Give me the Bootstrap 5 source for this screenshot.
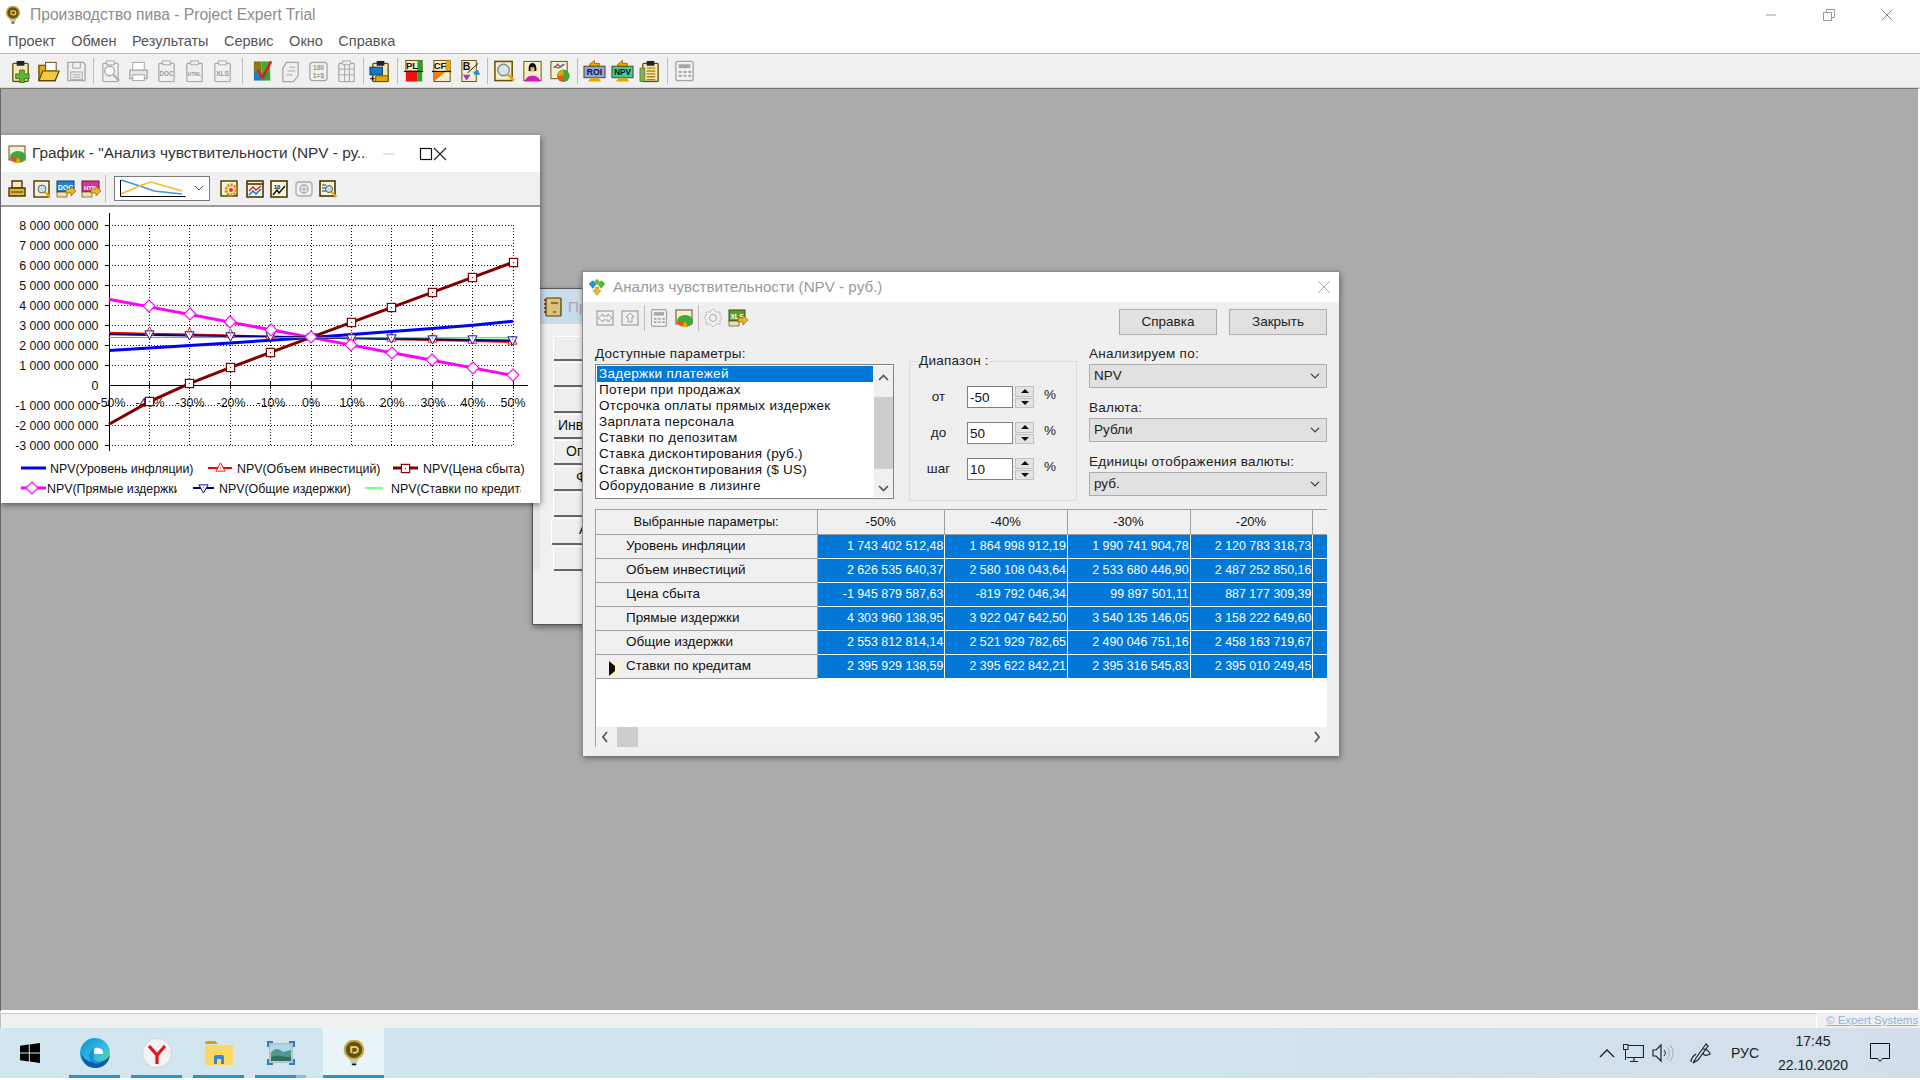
<!DOCTYPE html>
<html lang="ru">
<head>
<meta charset="utf-8">
<title>Производство пива - Project Expert Trial</title>
<link href="https://cdn.jsdelivr.net/npm/bootstrap@5.3.0/dist/css/bootstrap.min.css" rel="stylesheet">
<style>
html,body{margin:0;height:1080px;width:1920px;overflow:hidden;background:#fff}
body{font-family:"Liberation Sans",Arial,sans-serif;font-size:13.5px;color:#222;line-height:1.2}
svg text{font-family:"Liberation Sans",Arial,sans-serif}
.app{height:1080px;width:1920px}
.titlebar{height:30px;background:#fff;padding-left:4px;color:#8d8d8d;font-size:15.6px}
.titlebar .ttl{margin-left:8px}
.winbtn{width:58px;height:30px;display:flex;align-items:center;justify-content:center;color:#999}
.menubar{height:23px;background:#fff;padding-left:8px;gap:15.5px;font-size:14.5px;color:#555;border-bottom:0}
.menubar a{color:#555;text-decoration:none;padding:0}
.mainrule{height:1px;background:#b5b5b5}
.toolbar{height:34px;background:#f0f0f0;padding-left:6px;border-bottom:1px solid #d8d8d8}
.tb{width:28px;height:33px;display:flex;align-items:center;justify-content:center}
.tb svg{width:23px;height:24px}
.sep{width:6px;height:26px;position:relative;flex:none}
.sep:after{content:"";position:absolute;left:50%;top:0;bottom:0;width:1px;background:#bbb}
.sep.w{width:12px}
.mdi{height:924px;background:#ababab;position:relative;border-top:1px solid #777;border-left:1px solid #666;border-right:2px solid #fff;border-bottom:2px solid #fff;overflow:hidden}
.win{position:absolute;box-shadow:1px 2px 6px rgba(0,0,0,.45)}
.gwin{left:-1px;top:46px;width:540px;height:368px;background:#fff}
.gtitle{height:37px;background:#fff;padding-left:7px;font-size:15.4px;color:#333}
.gtitle .t{margin-left:5px;width:335px;white-space:nowrap;overflow:hidden}
.gtool{height:33px;background:#f0f0f0;padding-left:5px;border-bottom:2px solid #9c9c9c;box-sizing:content-box}
.gtool .t2{width:24.5px;display:flex;justify-content:center;align-items:center}
.gtool svg.s{width:20px;height:20px}
.gsep{width:1px;height:27px;background:#bbb;margin:0 8px 0 2px}
.gcombo{width:96px;height:25px;background:#fff;border:1px solid #7a7a7a;margin-right:8px;padding:2px 5px}
.chart{display:block;width:540px;height:296px}
.backwin{left:531px;top:199px;width:70px;height:337px;background:#f0f0f0;border:1px solid #555}
.backhead{height:35px;background:#c9dceb;padding-left:10px;color:#a9a9a9;font-size:15px}
.backhead span{margin-left:5px}
.backbtns{padding:12px 0 0 20px;background:linear-gradient(90deg,#e6e6e6 0 7px,#f0f0f0 7px)}
.backbtn{height:25px;margin-bottom:1px;background:#efefef;border-top:1px solid #fff;border-left:1px solid #fff;border-bottom:2px solid #666;border-radius:2px;font-size:14px;color:#111;padding-top:2px;white-space:nowrap}
.backbtn.a{padding-left:4px}.backbtn.b{padding-left:12px}.backbtn.c{padding-left:22px}.backbtn.d{margin-left:-2px;padding-left:27px;height:27px}
.dlg{left:581px;top:182px;width:757px;height:485px;background:#efefef;border:1px solid #8c8c8c;border-right:0;border-bottom:0}
.dtitle{height:30px;background:#fff;padding-left:4px;color:#9a9a9a;font-size:15.2px}
.dtitle span{margin-left:6px}
.dbody{padding:0 12px 0 12px}
.dtop{height:44px;padding-top:7px}
.dtools{margin-left:-3px;margin-top:-7px}
.dtools .t3{width:25px;height:32px;display:flex;align-items:center;justify-content:center}
.dtools svg{width:20px;height:20px}
.dtools .sep{width:4px}
.dbtn{width:98px;height:26px;border:1px solid #adadad;background:#e1e1e1;border-radius:0;padding:0;font-size:13.5px;color:#222;line-height:24px}
.dbtn:hover{background:#e1e1e1;border-color:#adadad;color:#222}
.dcols{height:163px}
.c1{width:299px}.c2{width:168px;margin-left:15px}.c3{width:238px;margin-left:12px}
.lbl{height:18px;line-height:15px;letter-spacing:.25px;white-space:nowrap}
.lst{height:135px;width:299px;background:#fff;border:1px solid #828282;padding:1px 1px 1px 1px;display:flex}
.lst .list-group{width:276px;border-radius:0;--bs-list-group-border-width:0;flex:none}
.lst .list-group-item{padding:0 0 0 2px;height:16px;line-height:16px;font-size:13.5px;letter-spacing:.3px;border-radius:0;background:#fff;color:#111;white-space:nowrap}
.lst .list-group-item.active{background:#0078d7;color:#fff;z-index:0}
.vs{width:19px;margin-left:1px;background:#f0f0f0;display:flex;flex-direction:column;align-items:center;justify-content:space-between;padding:8px 0 5px}
.vs .th{width:19px;height:72px;background:#cdcdcd}
.fs{margin:7px 0 0;border:1px solid #dcdcdc;height:148px;padding:0 0 0 0;min-width:0}
.fs legend{float:none;width:auto;margin:-9px 0 0 8px;padding:0 1px;font-size:13.5px;line-height:16px;background:#efefef;letter-spacing:.25px}
.fr{height:36px;padding-left:0}
.fwrap{padding-top:10px}
.fr .n{width:57px;text-align:center;padding-right:0}
.fr .form-control{width:46px;height:22px;padding:0 0 0 2px;border:1px solid #7f7f7f;border-radius:0;font-size:13.5px;font-family:inherit;color:#111;line-height:20px;box-shadow:none}
.spin{width:19px;height:22px;margin-left:2px;display:flex;flex-direction:column;gap:1px}
.spin i{flex:1;background:#e3e3e3;border:1px solid #c0c0c0;display:flex;align-items:center;justify-content:center}
.up{width:0;height:0;border:4px solid transparent;border-top:0;border-bottom:4px solid #111}
.dn{width:0;height:0;border:4px solid transparent;border-bottom:0;border-top:4px solid #111}
.fr .pct{margin-left:10px;font-size:13.5px;margin-top:-4px}
.form-select.sel{height:24px;border-radius:0;border:1px solid #adadad;background-color:#e1e1e1;font-size:13.5px;padding:0 24px 0 4px;color:#222;line-height:22px;box-shadow:none;font-family:inherit;background-position:right 5px center;background-size:12px 10px}
.c3 .lbl+.sel{margin-bottom:12px}
.gridf{width:732px;height:238px;background:#fff;border-left:1px solid #a0a0a0;border-top:1px solid #a0a0a0;display:flex;flex-direction:column;margin-bottom:0}
.gridc{height:217px;overflow:hidden}
.tbl{table-layout:fixed;width:840px;margin:0;border-collapse:collapse;--bs-table-bg:transparent;font-size:12.4px}
.tbl td,.tbl th{height:24px;padding:0 1px 0 0;font-weight:400;white-space:nowrap;overflow:hidden;vertical-align:middle;border:1px solid #fff;border-width:0 1px 1px 0;box-shadow:none;line-height:22px}
.tbl th{background:#f0f0f0;color:#111;border-color:#a0a0a0;border-width:0 1px 1px 0;text-align:center;font-size:13px}
.tbl th.h0{padding-left:0}
.tbl tbody th{text-align:left;padding-left:30px;position:relative;font-size:13.5px}
.tbl td{background:#0078d7;color:#fff;text-align:right}
.tbl .lastc{border-bottom:1px solid #a0a0a0}
.tbl .mark{position:absolute;left:13px;top:6px;width:0;height:0;border:5px solid transparent;border-left:6px solid #111;border-right:0}
.hs{height:20px;background:#f0f0f0;display:flex;align-items:center;justify-content:space-between;padding-right:6px;padding-left:5px;position:relative}
.hs .th{position:absolute;left:21px;top:0;width:21px;height:20px;background:#cdcdcd}
.status{height:16px;background:#f0f0f0;border-top:1px solid #fff;padding:0}
.status .cell1{width:1817px;border:1px solid #fff;border-left:1px solid #bbb;border-top:1px solid #c8c8c8;height:16px}
.status a{margin-left:9px;color:#8fb3d9;font-size:11.5px;line-height:14px;text-decoration:underline;white-space:nowrap}
.taskbar{height:50px;background:linear-gradient(90deg,#d1e6ee 0,#d1e5ee 50%,#d3deea 100%);position:relative}
.tapp{width:51px;height:50px;margin-right:11px;display:flex;align-items:center;justify-content:center;border-bottom:3px solid #2b93c9;padding-top:3px}
.tapp.act{width:61px;margin:0 0 0 6px;background:#e9f4f9}
.tapp.pic{border-image:linear-gradient(90deg,#2b93c9 0 80%,#89bfdd 80%) 1}
.tstart{width:60px;height:50px;margin-right:9px;display:flex;align-items:center;justify-content:center}
.tray{color:#222;font-size:14px}
.tray .lang{width:30px;margin-left:19px;font-size:14px;text-align:center}
.clock{width:72px;margin-left:17px;text-align:center;font-size:14px;line-height:24px;white-space:nowrap}
.ntf{margin-left:21px;margin-right:30px}
</style>
</head>
<body>
<svg width="0" height="0" class="position-absolute">
<defs>
<symbol id="clipb" viewBox="0 0 24 24"><rect x="4" y="4" width="16" height="19" rx="1" fill="#f3e7bd" stroke="#6b4f00" stroke-width="1.4"/><rect x="8" y="1.5" width="8" height="5" fill="#222"/></symbol>
<symbol id="clipg" viewBox="0 0 24 24"><rect x="4" y="4" width="16" height="19" rx="1" fill="#f0f0f0" stroke="#a9a9a9" stroke-width="1.3"/><rect x="8" y="1.5" width="8" height="4" fill="#f0f0f0" stroke="#a9a9a9"/></symbol>
<symbol id="i-new" viewBox="0 0 24 24"><use href="#clipb"/><path d="M11 11h5v4h5v5h-5v4h-5v-4H7v-5h4z" fill="#63b32e" stroke="#2d6a10" stroke-width=".8"/></symbol>
<symbol id="i-open" viewBox="0 0 24 24"><path d="M2 6h7l2 2h8v14H2z" fill="#e8a800" stroke="#5f4500" stroke-width="1.3"/><rect x="9" y="3" width="11" height="9" fill="#fff" stroke="#5f4500"/><path d="M6 12h17l-4 10H2z" fill="#f6c93d" stroke="#5f4500" stroke-width="1.3"/></symbol>
<symbol id="i-save" viewBox="0 0 24 24"><path d="M3 3h16l2 2v17H3z" fill="#f0f0f0" stroke="#a5a5a5" stroke-width="1.4"/><rect x="8" y="3" width="8" height="6" fill="none" stroke="#a5a5a5"/><rect x="6" y="13" width="12" height="8" fill="none" stroke="#a5a5a5"/><path d="M8 16h8M8 18.500h8" stroke="#a5a5a5"/></symbol>
<symbol id="i-prev" viewBox="0 0 24 24"><use href="#clipg"/><circle cx="11" cy="12" r="5" fill="#fff" stroke="#a5a5a5" stroke-width="1.4"/><path d="M15 16l6 6" stroke="#a5a5a5" stroke-width="2"/></symbol>
<symbol id="i-print" viewBox="0 0 24 24"><rect x="6" y="3" width="12" height="9" fill="#fff" stroke="#a5a5a5"/><path d="M3 11h18v9H3z" fill="#e6e6e6" stroke="#a5a5a5" stroke-width="1.3"/><rect x="6" y="16" width="12" height="6" fill="#fff" stroke="#a5a5a5"/></symbol>
<symbol id="i-doc" viewBox="0 0 24 24"><use href="#clipg"/><text x="12" y="17" font-size="6.6" text-anchor="middle" fill="#999" font-weight="700">DOC</text></symbol>
<symbol id="i-html" viewBox="0 0 24 24"><use href="#clipg"/><text x="12" y="17" font-size="5.2" text-anchor="middle" fill="#999" font-weight="700">HTML</text></symbol>
<symbol id="i-xls" viewBox="0 0 24 24"><use href="#clipg"/><text x="12" y="17" font-size="7" text-anchor="middle" fill="#999" font-weight="700">XLS</text></symbol>
<symbol id="i-chk" viewBox="0 0 24 24"><rect x="3" y="2" width="8" height="11" fill="#8a7a10"/><rect x="11" y="2" width="9" height="11" fill="#46a82f"/><rect x="3" y="13" width="8" height="9" fill="#1780b8"/><rect x="11" y="13" width="9" height="9" fill="#2da43e"/><path d="M7 11l5 8 9-17" fill="none" stroke="#e21b1b" stroke-width="2.6"/></symbol>
<symbol id="i-list" viewBox="0 0 24 24"><path d="M8 3h12v14l-5 6H4V9z" fill="#f0f0f0" stroke="#a5a5a5" stroke-width="1.3"/><path d="M11 8h6M9 12h8M8 16h6" stroke="#a5a5a5"/></symbol>
<symbol id="i-num" viewBox="0 0 24 24"><rect x="3" y="3" width="18" height="19" rx="3" fill="#f0f0f0" stroke="#a5a5a5" stroke-width="1.3"/><text x="12" y="11" font-size="7" text-anchor="middle" fill="#999" font-weight="700">180</text><text x="12" y="19.500" font-size="7" text-anchor="middle" fill="#999" font-weight="700">1=$</text></symbol>
<symbol id="i-grid" viewBox="0 0 24 24"><use href="#clipg"/><path d="M4 10h16M4 16h16M10 5v18M15 5v18" stroke="#a5a5a5"/></symbol>
<symbol id="i-flow" viewBox="0 0 24 24"><use href="#clipb"/><rect x="1" y="8" width="13" height="8" fill="#1a76c4" stroke="#0a3c6b"/><path d="M7 17h13v6H7z" fill="#e8a800" stroke="#6b4f00"/><path d="M1 20h5M3.500 18v4" stroke="#111"/></symbol>
<symbol id="i-pl" viewBox="0 0 24 24"><rect x="3" y="1" width="17" height="11" fill="#f5eecd" stroke="#6b4f00"/><rect x="15" y="1" width="5" height="22" fill="#26a326"/><text x="9.500" y="10" font-size="10" text-anchor="middle" font-weight="700" fill="#111">PL</text><path d="M1 12.500h20" stroke="#111" stroke-width="1.3"/><rect x="3" y="13" width="12" height="10" fill="#ec0f0f"/></symbol>
<symbol id="i-cf" viewBox="0 0 24 24"><rect x="3" y="1" width="17" height="22" fill="#f5eecd" stroke="#6b4f00"/><path d="M15 1h5v12h-5z" fill="#e8a800"/><text x="9.500" y="10" font-size="10" text-anchor="middle" font-weight="700" fill="#111">CF</text><path d="M1 12.500h20" stroke="#111" stroke-width="1.3"/><path d="M3 23V13h12z" fill="#f07b10"/></symbol>
<symbol id="i-b" viewBox="0 0 24 24"><rect x="3" y="1" width="15" height="22" fill="#f5eecd" stroke="#6b4f00"/><text x="8" y="11" font-size="11" text-anchor="middle" font-weight="700" fill="#111">B</text><path d="M4 16l4 6 4-6z" fill="#b52bc4"/><path d="M15 13l5-2 2 5h-6z" fill="#1f8fc4"/><path d="M9 14l11-10" stroke="#111"/></symbol>
<symbol id="i-mag" viewBox="0 0 24 24"><rect x="2" y="2" width="18" height="20" fill="#f5eecd" stroke="#6b4f00" stroke-width="1.6"/><circle cx="11" cy="11" r="6" fill="#cfe6ef" stroke="#888" stroke-width="1.4"/><path d="M15 15l7 7" stroke="#e1ac1c" stroke-width="3"/></symbol>
<symbol id="i-per" viewBox="0 0 24 24"><rect x="3" y="2" width="18" height="20" fill="#f5eecd" stroke="#6b4f00"/><circle cx="12" cy="9" r="4" fill="#e9b98b"/><path d="M8 9c0-7 8-7 8 0v3h-2V8h-4v4H8z" fill="#111"/><path d="M4 23c1-8 15-8 16 0z" fill="#d917c2"/></symbol>
<symbol id="i-pie" viewBox="0 0 24 24"><rect x="2" y="2" width="17" height="18" fill="#f5eecd" stroke="#6b4f00"/><path d="M5 9l4-4 3 3 4-3" fill="none" stroke="#e44" stroke-width="1.4"/><path d="M5 7l5 2 5-4" fill="none" stroke="#27c" stroke-width="1.2"/><circle cx="15" cy="17" r="6.500" fill="#3fa83a"/><path d="M15 17V11a6 6 0 0 0-6 6z" fill="#e8a800"/><path d="M15 17H9a6 6 0 0 0 7 6z" fill="#e5541c"/></symbol>
<symbol id="i-roi" viewBox="0 0 24 24"><path d="M7 5l5-4v3h5v4H7z" fill="#e8a800" stroke="#6b4f00" stroke-width=".7"/><rect x="1" y="7" width="22" height="12" fill="#8fa4e8" stroke="#5c4300"/><text x="12" y="16.500" font-size="9" text-anchor="middle" font-weight="700" fill="#111">ROI</text><path d="M8 19h8l3 4H5z" fill="#e8a800"/></symbol>
<symbol id="i-npv" viewBox="0 0 24 24"><path d="M7 5l5-4v3h5v4H7z" fill="#e8a800" stroke="#6b4f00" stroke-width=".7"/><rect x="1" y="7" width="22" height="12" fill="#3fc9a0" stroke="#5c4300"/><text x="12" y="16.500" font-size="8.500" text-anchor="middle" font-weight="700" fill="#111">NPV</text><path d="M8 19h8l3 4H5z" fill="#e8a800"/></symbol>
<symbol id="i-cl" viewBox="0 0 24 24"><use href="#clipb"/><path d="M1 9h5v14H1z" fill="#7cba3e" stroke="#555" stroke-width=".7"/><path d="M8 9h9M8 12h9M8 15h9M8 18h9M8 21h9" stroke="#b88400" stroke-width="1.5"/></symbol>
<symbol id="i-calc" viewBox="0 0 24 24"><rect x="3" y="2" width="18" height="20" rx="2" fill="#f0f0f0" stroke="#a5a5a5" stroke-width="1.4"/><rect x="6" y="5" width="12" height="4" fill="#a5a5a5"/><path d="M6 12h3v2H6zm5 0h3v2h-3zm5 0h3v2h-3zM6 16h3v2H6zm5 0h3v2h-3zm5 0h3v2h-3z" fill="#a5a5a5"/></symbol>
<symbol id="s-print" viewBox="0 0 20 20"><path d="M5 2h10v7H5z" fill="#f4e9c0" stroke="#4a3800" stroke-width="1.4"/><path d="M2 9h16v8H2z" fill="#e0b53b" stroke="#4a3800" stroke-width="1.4"/><path d="M4 13h12" stroke="#4a3800"/></symbol>
<symbol id="s-mag" viewBox="0 0 20 20"><rect x="2" y="2" width="15" height="16" fill="#f6f1db" stroke="#4a3800" stroke-width="1.4"/><circle cx="10" cy="10" r="4" fill="#bfe0f2" stroke="#666"/><path d="M13 13l5 5" stroke="#e1ac1c" stroke-width="2.4"/></symbol>
<symbol id="s-doc" viewBox="0 0 20 20"><rect x="1" y="2" width="17" height="11" fill="#1f87c9" stroke="#0e3b63"/><text x="9.500" y="10.500" font-size="7" text-anchor="middle" font-weight="700" fill="#fff">DOC</text><path d="M1 13v5h10v-5z" fill="#e9dfb8" stroke="#6b4f00" stroke-width=".7"/><path d="M10 10h5V7l5 5-5 5v-3h-5z" fill="#f2b322" stroke="#7a5a00" stroke-width=".6"/></symbol>
<symbol id="s-html" viewBox="0 0 20 20"><rect x="1" y="2" width="17" height="11" fill="#d7358f" stroke="#6b1048"/><text x="9.500" y="10.500" font-size="6" text-anchor="middle" font-weight="700" fill="#fff">HTM</text><path d="M1 13v5h10v-5z" fill="#e9dfb8" stroke="#6b4f00" stroke-width=".7"/><path d="M10 10h5V7l5 5-5 5v-3h-5z" fill="#f2b322" stroke="#7a5a00" stroke-width=".6"/></symbol>
<symbol id="s-gear" viewBox="0 0 20 20"><rect x="1" y="2" width="16" height="15" fill="#f6f1db" stroke="#4a3800" stroke-width="1.4"/><circle cx="11" cy="11" r="5" fill="none" stroke="#e39200" stroke-width="3" stroke-dasharray="2.200 1"/><circle cx="11" cy="11" r="2" fill="#e3322c"/></symbol>
<symbol id="s-cha" viewBox="0 0 20 20"><rect x="2" y="2" width="16" height="16" fill="#f9f5e2" stroke="#4a3800" stroke-width="1.6"/><path d="M2 5h16" stroke="#4a3800" stroke-width="1.6"/><path d="M4 12l4-4 3 3 5-4" fill="none" stroke="#d22" stroke-width="1.5"/><path d="M4 16l4-4 3 3 5-5" fill="none" stroke="#17c" stroke-width="1.5"/></symbol>
<symbol id="s-chb" viewBox="0 0 20 20"><rect x="2" y="2" width="16" height="16" fill="#f9f5e2" stroke="#4a3800" stroke-width="1.6"/><text x="8" y="9.500" font-size="6" font-weight="700" text-anchor="middle" fill="#111">10</text><path d="M4 16l4-5 2 3 6-7" fill="none" stroke="#111" stroke-width="1.4"/></symbol>
<symbol id="s-gg" viewBox="0 0 20 20"><rect x="2" y="3" width="16" height="14" rx="3" fill="#f0f0f0" stroke="#aaa" stroke-width="1.3"/><circle cx="10" cy="10" r="4" fill="none" stroke="#aaa" stroke-width="1.3"/><path d="M6 10h8M10 6v8" stroke="#aaa"/></symbol>
<symbol id="s-tbm" viewBox="0 0 20 20"><rect x="2" y="2" width="15" height="15" fill="#f6f1db" stroke="#4a3800" stroke-width="1.6"/><path d="M4 6h4M4 9h4M4 12h4" stroke="#333"/><circle cx="11" cy="10" r="3.500" fill="#bfe0f2" stroke="#555"/><path d="M13.500 13l5 5" stroke="#e1ac1c" stroke-width="2.2"/></symbol>
<symbol id="s-in" viewBox="0 0 20 20"><rect x="2" y="3" width="16" height="14" fill="#f0f0f0" stroke="#a5a5a5" stroke-width="1.3"/><path d="M3 10l5-4v2h5V6l4 4-4 4v-2H8v2z" fill="none" stroke="#a5a5a5"/></symbol>
<symbol id="s-up" viewBox="0 0 20 20"><rect x="2" y="3" width="16" height="14" fill="#f0f0f0" stroke="#a5a5a5" stroke-width="1.3"/><path d="M10 5l4 4h-2v5H8V9H6z" fill="none" stroke="#a5a5a5"/></symbol>
<symbol id="s-pie" viewBox="0 0 20 20"><rect x="2" y="2" width="16" height="14" fill="#f4efdc" stroke="#6b4f00"/><ellipse cx="11" cy="13" rx="8" ry="6" fill="#3fa83a"/><path d="M11 13H3a8 6 0 0 0 5 5.500z" fill="#e5541c"/><path d="M11 13l-3 5.500a8 6 0 0 0 6 0z" fill="#e8a800"/></symbol>
<symbol id="s-ggr" viewBox="0 0 20 20"><path d="M10 1l3 3 4 0v4l2 2-2 2v4h-4l-3 3-3-3H3v-4l-2-2 2-2V4h4z" fill="#f0f0f0" stroke="#aaa" stroke-dasharray="2 1"/><circle cx="10" cy="10" r="3.500" fill="none" stroke="#aaa"/></symbol>
<symbol id="s-xls" viewBox="0 0 20 20"><rect x="1" y="2" width="16" height="11" fill="#5b9c2c" stroke="#3a4d10"/><text x="9" y="10.500" font-size="7" text-anchor="middle" font-weight="700" fill="#fff">XLS</text><path d="M1 13v5h10v-5z" fill="#e9dfb8" stroke="#6b4f00" stroke-width=".7"/><path d="M10 10h5V7l5 5-5 5v-3h-5z" fill="#f2b322" stroke="#7a5a00" stroke-width=".6"/></symbol>
<symbol id="s-cube" viewBox="0 0 24 24"><path d="M12 2l4 4-4 4-4-4z" fill="#6ebc2e"/><path d="M2 8l5-4 4 5-4 5z" fill="#1e90d8"/><path d="M22 8l-5-4-4 5 4 5z" fill="#57b73c"/><path d="M12 22l5-6h-3v-4h-4v4H7z" fill="#f0b62d" stroke="#a87a00" stroke-width=".6"/></symbol>
<symbol id="s-book" viewBox="0 0 20 20"><rect x="3" y="1" width="15" height="18" rx="1" fill="#dcc27a" stroke="#4d3a00" stroke-width="1.2"/><path d="M3 3h-2M3 7H1m2 4H1m2 4H1" stroke="#4d3a00" stroke-width="1.4"/><path d="M8 6h7M10 15h3" stroke="#222" stroke-width="1.2"/></symbol>
<symbol id="bulb" viewBox="0 0 24 24"><circle cx="12" cy="9" r="8.500" fill="#5d5024" stroke="#c9aa3d" stroke-width="2"/><path d="M9.500 12V6.500h3.500a2.500 2.500 0 0 1 0 5.200h-2" fill="none" stroke="#f3cf45" stroke-width="1.8"/><path d="M8 18.500h8M9 20.500h6" stroke="#b7b7a2" stroke-width="1.4"/><path d="M10 22.500h4" stroke="#111" stroke-width="1.6"/></symbol>
<symbol id="m-tri" viewBox="0 0 12 12" overflow="visible"><path d="M6 1L11 10H1z" fill="#fff" stroke="#ff0000" stroke-width="1"/><rect x="5.500" y="6" width="1" height="1" fill="#ff0000"/></symbol>
<symbol id="m-sq" viewBox="0 0 12 12"><rect x="1.500" y="1.500" width="9" height="9" fill="#fff" stroke="#800000" stroke-width="1.300"/><rect x="5.500" y="5.500" width="1.200" height="1.200" fill="#800000"/></symbol>
<symbol id="m-dia" viewBox="0 0 14 14"><path d="M7 1l6 6-6 6-6-6z" fill="#fff" stroke="#ff00ff" stroke-width="1.100"/></symbol>
<symbol id="m-tv" viewBox="0 0 12 12"><path d="M1 2h10L6 11z" fill="#fff" stroke="#000080" stroke-width="1"/><rect x="5.500" y="4" width="1" height="1" fill="#000080"/></symbol>
</defs>
</svg>

<div class="app d-flex flex-column">
  <div class="titlebar d-flex align-items-center">
    <svg width="18" height="22" viewBox="0 0 24 24"><use href="#bulb"/></svg>
    <span class="ttl flex-grow-1">Производство пива - Project Expert Trial</span>
    <div class="winbtn"><svg width="12" height="12"><path d="M1 6h10" stroke="#999"/></svg></div>
    <div class="winbtn"><svg width="12" height="12"><path d="M.5 3.500h8v8h-8zM3.500 3V.5h8v8H9" fill="none" stroke="#999"/></svg></div>
    <div class="winbtn"><svg width="12" height="12"><path d="M.5.5l11 11M11.500.5l-11 11" stroke="#888"/></svg></div>
    <div style="width:4px"></div>
  </div>
  <nav class="menubar nav align-items-center">
    <a class="nav-link" href="#">Проект</a><a class="nav-link" href="#">Обмен</a><a class="nav-link" href="#">Результаты</a><a class="nav-link" href="#">Сервис</a><a class="nav-link" href="#">Окно</a><a class="nav-link" href="#">Справка</a>
  </nav>
  <div class="mainrule"></div>
  <div class="toolbar d-flex align-items-center">
    <span class="tb"><svg><use href="#i-new"/></svg></span><span class="tb"><svg><use href="#i-open"/></svg></span><span class="tb"><svg><use href="#i-save"/></svg></span>
    <span class="sep"></span>
    <span class="tb"><svg><use href="#i-prev"/></svg></span><span class="tb"><svg><use href="#i-print"/></svg></span><span class="tb"><svg><use href="#i-doc"/></svg></span><span class="tb"><svg><use href="#i-html"/></svg></span><span class="tb"><svg><use href="#i-xls"/></svg></span>
    <span class="sep w"></span>
    <span class="tb"><svg><use href="#i-chk"/></svg></span><span class="tb"><svg><use href="#i-list"/></svg></span><span class="tb"><svg><use href="#i-num"/></svg></span><span class="tb"><svg><use href="#i-grid"/></svg></span>
    <span class="sep"></span>
    <span class="tb"><svg><use href="#i-flow"/></svg></span>
    <span class="sep"></span>
    <span class="tb"><svg><use href="#i-pl"/></svg></span><span class="tb"><svg><use href="#i-cf"/></svg></span><span class="tb"><svg><use href="#i-b"/></svg></span>
    <span class="sep"></span>
    <span class="tb"><svg><use href="#i-mag"/></svg></span><span class="tb"><svg><use href="#i-per"/></svg></span><span class="tb"><svg><use href="#i-pie"/></svg></span>
    <span class="sep"></span>
    <span class="tb"><svg><use href="#i-roi"/></svg></span><span class="tb"><svg><use href="#i-npv"/></svg></span><span class="tb"><svg><use href="#i-cl"/></svg></span>
    <span class="sep"></span>
    <span class="tb"><svg><use href="#i-calc"/></svg></span>
  </div>

  <main class="mdi">
    <div class="win backwin">
      <div class="backhead d-flex align-items-center"><svg width="20" height="20"><use href="#s-book"/></svg><span>Пр</span></div>
      <div class="backbtns">
        <div class="backbtn"></div><div class="backbtn"></div><div class="backbtn"></div>
        <div class="backbtn a">Инв</div><div class="backbtn b">Оп</div><div class="backbtn c">Ф</div><div class="backbtn"></div><div class="backbtn d">А</div><div class="backbtn"></div>
      </div>
    </div>

    <section class="win gwin">
      <div class="gtitle d-flex align-items-center">
        <svg width="20" height="20"><use href="#s-pie"/></svg>
        <div class="t">График - "Анализ чувствительности (NPV - ру...</div>
        <svg width="12" height="12" class="ms-3"><path d="M0 6h12" stroke="#ccc"/></svg>
        <svg width="14" height="14" class="ms-4 ps-0"><rect x="1.500" y="1.500" width="11" height="11" fill="none" stroke="#111" stroke-width="1.2"/></svg>
        <svg width="14" height="14" class="close-x"><path d="M1 1l12 12M13 1L1 13" stroke="#222" stroke-width="1.1"/></svg>
      </div>
      <div class="gtool d-flex align-items-center">
        <span class="t2"><svg class="s"><use href="#s-print"/></svg></span><span class="t2"><svg class="s"><use href="#s-mag"/></svg></span><span class="t2"><svg class="s"><use href="#s-doc"/></svg></span><span class="t2"><svg class="s"><use href="#s-html"/></svg></span>
        <span class="gsep"></span>
        <div class="gcombo d-flex align-items-center justify-content-between">
          <svg width="66" height="19" viewBox="0 0 66 19"><path d="M1 1l22 7 11 4 28 3" transform="translate(0,0)" fill="none" stroke="#3f97d6" stroke-width="1.5"/><path d="M1 15l21-9 9-3 31 9" fill="none" stroke="#f2bd26" stroke-width="1.500"/><path d="M.5 1v16.500h65" fill="none" stroke="#000"/></svg>
          <svg width="10" height="7"><path d="M1 1l4 4 4-4" fill="none" stroke="#555"/></svg>
        </div>
        <span class="t2"><svg class="s"><use href="#s-gear"/></svg></span><span class="t2"><svg class="s"><use href="#s-cha"/></svg></span><span class="t2"><svg class="s"><use href="#s-chb"/></svg></span><span class="t2"><svg class="s"><use href="#s-gg"/></svg></span><span class="t2"><svg class="s"><use href="#s-tbm"/></svg></span>
      </div>
      <svg class="chart" viewBox="0 207 540 296" font-size="12.4" fill="#111">
        <g stroke="#111" stroke-width="1" stroke-dasharray="1 2">
          <path d="M109 225.500H513M109 245.500H513M109 265.500H513M109 285.500H513M109 305.500H513M109 325.500H513M109 345.500H513M109 365.500H513M109 405.500H513M109 425.500H513M109 445.500H513"/>
          <path d="M149.500 225V445M189.500 225V445M230.500 225V445M270.500 225V445M311.500 225V445M351.500 225V445M391.500 225V445M432.500 225V445M472.500 225V445M513.500 225V445"/>
        </g>
        <g stroke="#000"><path d="M109.500 213V451M109 385.500H528"/><path d="M105 225.500h4M105 245.500h4M105 265.500h4M105 285.500h4M105 305.500h4M105 325.500h4M105 345.500h4M105 365.500h4M105 405.500h4M105 425.500h4M105 445.500h4" /><path d="M149.500 381v8M189.500 381v8M230.500 381v8M270.500 381v8M311.500 381v8M351.500 381v8M391.500 381v8M432.500 381v8M472.500 381v8M513.500 381v8"/></g>
        <g text-anchor="end">
          <text x="98.500" y="230">8 000 000 000</text><text x="98.500" y="250">7 000 000 000</text><text x="98.500" y="270">6 000 000 000</text><text x="98.500" y="290">5 000 000 000</text><text x="98.500" y="310">4 000 000 000</text><text x="98.500" y="330">3 000 000 000</text><text x="98.500" y="350">2 000 000 000</text><text x="98.500" y="370">1 000 000 000</text><text x="98.500" y="390">0</text><text x="98.500" y="410">-1 000 000 000</text><text x="98.500" y="430">-2 000 000 000</text><text x="98.500" y="450">-3 000 000 000</text>
        </g>
        <g text-anchor="middle">
          <text x="111" y="407">-50%</text><text x="150" y="407">-40%</text><text x="190" y="407">-30%</text><text x="231" y="407">-20%</text><text x="271" y="407">-10%</text><text x="311" y="407">0%</text><text x="352" y="407">10%</text><text x="392" y="407">20%</text><text x="433" y="407">30%</text><text x="473" y="407">40%</text><text x="513" y="407">50%</text>
        </g>
        <polyline fill="none" stroke="#0000ff" stroke-width="3" points="109,350.400 149.400,348 189.800,345.500 230.200,342.900 270.600,340.200 311,337.400 351.400,334.500 391.800,331.500 432.200,328.500 472.600,325.300 513,321.300"/>
        <polyline fill="none" stroke="#ff0000" stroke-width="2" points="109,332.800 149.400,333.700 189.800,334.600 230.200,335.600 270.600,336.500 311,337.400 351.400,338.300 391.800,339.300 432.200,340.100 472.600,341.100 513,342"/>
        <polyline fill="none" stroke="#ff00ff" stroke-width="3" points="109,299.200 149.400,306.900 189.800,314.500 230.200,322.100 270.600,329.800 311,337.400 351.400,345.100 391.800,352.700 432.200,360.300 472.600,367.900 513,375.500"/>
        <polyline fill="none" stroke="#800000" stroke-width="3" points="109,424.200 149.400,401.700 189.800,383.300 230.200,367.600 270.600,352.400 311,337.400 351.400,322.300 391.800,307.300 432.200,292.300 472.600,277.300 513,262.300"/>
        <polyline fill="none" stroke="#000080" stroke-width="2" points="109,334.200 149.400,334.900 189.800,335.500 230.200,336.100 270.600,336.800 311,337.400 351.400,338.100 391.800,338.700 432.200,339.300 472.600,339.900 513,340.600"/>
        <polyline fill="none" stroke="#00ff00" stroke-width="1" points="109,337.500 513,337.800"/>
        <g>
          <use href="#m-tri" x="144" y="326" width="11" height="11"/><use href="#m-tri" x="184" y="327" width="11" height="11"/><use href="#m-tri" x="225" y="328" width="11" height="11"/><use href="#m-tri" x="265" y="329" width="11" height="11"/><use href="#m-tri" x="346" y="331" width="11" height="11"/><use href="#m-tri" x="386" y="332" width="11" height="11"/><use href="#m-tri" x="427" y="333" width="11" height="11"/><use href="#m-tri" x="467" y="334" width="11" height="11"/><use href="#m-tri" x="507" y="335" width="11" height="11"/>
          <use href="#m-tv" x="144" y="329" width="11" height="11"/><use href="#m-tv" x="184" y="330" width="11" height="11"/><use href="#m-tv" x="225" y="331" width="11" height="11"/><use href="#m-tv" x="265" y="331" width="11" height="11"/><use href="#m-tv" x="306" y="332" width="11" height="11"/><use href="#m-tv" x="346" y="333" width="11" height="11"/><use href="#m-tv" x="386" y="333" width="11" height="11"/><use href="#m-tv" x="427" y="334" width="11" height="11"/><use href="#m-tv" x="467" y="334" width="11" height="11"/><use href="#m-tv" x="507" y="335" width="11" height="11"/>
          <use href="#m-dia" x="142" y="299" width="14" height="14"/><use href="#m-dia" x="183" y="307" width="14" height="14"/><use href="#m-dia" x="223" y="315" width="14" height="14"/><use href="#m-dia" x="264" y="323" width="14" height="14"/><use href="#m-dia" x="304" y="330" width="14" height="14"/><use href="#m-dia" x="344" y="338" width="14" height="14"/><use href="#m-dia" x="385" y="346" width="14" height="14"/><use href="#m-dia" x="425" y="353" width="14" height="14"/><use href="#m-dia" x="466" y="361" width="14" height="14"/><use href="#m-dia" x="506" y="368" width="14" height="14"/>
          <use href="#m-sq" x="144" y="396" width="11" height="11"/><use href="#m-sq" x="184" y="378" width="11" height="11"/><use href="#m-sq" x="225" y="362" width="11" height="11"/><use href="#m-sq" x="265" y="347" width="11" height="11"/><use href="#m-sq" x="346" y="317" width="11" height="11"/><use href="#m-sq" x="386" y="302" width="11" height="11"/><use href="#m-sq" x="427" y="287" width="11" height="11"/><use href="#m-sq" x="467" y="272" width="11" height="11"/><use href="#m-sq" x="508" y="257" width="11" height="11"/>
        </g>
        <defs><clipPath id="cl1"><rect x="47" y="475" width="130" height="22"/></clipPath><clipPath id="cl2"><rect x="391" y="475" width="130" height="22"/></clipPath></defs>
        <path d="M21 468h25" stroke="#0000ff" stroke-width="3"/><text x="50" y="472.500">NPV(Уровень инфляции)</text>
        <path d="M208 468h24" stroke="#ff0000" stroke-width="2"/><use href="#m-tri" x="215" y="462" width="11" height="11"/><text x="237" y="472.500">NPV(Объем инвестиций)</text>
        <path d="M393 468h25" stroke="#800000" stroke-width="3"/><use href="#m-sq" x="400" y="463" width="11" height="11"/><text x="423" y="472.500">NPV(Цена сбыта)</text>
        <path d="M21 488h25" stroke="#ff00ff" stroke-width="3"/><use href="#m-dia" x="25" y="481" width="14" height="14"/><text x="47" y="492.500" clip-path="url(#cl1)">NPV(Прямые издержки)</text>
        <path d="M193 488h21" stroke="#000080" stroke-width="2"/><use href="#m-tv" x="198" y="483" width="11" height="11"/><text x="219" y="492.500">NPV(Общие издержки)</text>
        <path d="M365 488h18" stroke="#00ff00" stroke-width="1"/><text x="391" y="492.500" clip-path="url(#cl2)">NPV(Ставки по кредитам)</text>
      </svg>
    </section>

    <section class="win dlg">
      <div class="dtitle d-flex align-items-center">
        <svg width="20" height="22" viewBox="0 0 24 24"><use href="#s-cube"/></svg><span class="flex-grow-1">Анализ чувствительности (NPV - руб.)</span>
        <svg width="14" height="14" class="me-2"><path d="M1 1l12 12M13 1L1 13" stroke="#aaa"/></svg>
      </div>
      <div class="dbody">
        <div class="dtop d-flex justify-content-between align-items-start">
          <div class="dtools d-flex align-items-center">
            <span class="t3"><svg><use href="#s-in"/></svg></span><span class="t3"><svg><use href="#s-up"/></svg></span><span class="sep"></span><span class="t3"><svg><use href="#i-calc"/></svg></span><span class="t3"><svg><use href="#s-pie"/></svg></span><span class="sep"></span><span class="t3"><svg><use href="#s-ggr"/></svg></span><span class="t3"><svg><use href="#s-xls"/></svg></span>
          </div>
          <div class="d-flex gap-2 me-0">
            <button type="button" class="btn dbtn">Справка</button>
            <button type="button" class="btn dbtn ms-1">Закрыть</button>
          </div>
        </div>
        <div class="dcols d-flex">
          <div class="c1">
            <div class="lbl">Доступные параметры:</div>
            <div class="lst">
              <ul class="list-group">
                <li class="list-group-item active">Задержки платежей</li>
                <li class="list-group-item">Потери при продажах</li>
                <li class="list-group-item">Отсрочка оплаты прямых издержек</li>
                <li class="list-group-item">Зарплата персонала</li>
                <li class="list-group-item">Ставки по депозитам</li>
                <li class="list-group-item">Ставка дисконтирования (руб.)</li>
                <li class="list-group-item">Ставка дисконтирования ($ US)</li>
                <li class="list-group-item">Оборудование в лизинге</li>
              </ul>
              <div class="vs position-relative">
                <svg width="11" height="7"><path d="M1 6l4.500-4.500L10 6" fill="none" stroke="#555" stroke-width="1.700"/></svg>
                <div class="th"></div>
                <svg width="11" height="7"><path d="M1 1l4.500 4.500L10 1" fill="none" stroke="#555" stroke-width="1.700"/></svg>
              </div>
            </div>
          </div>
          <div class="c2">
            <fieldset class="fs">
              <legend>Диапазон :</legend>
              <div class="fwrap">
                <div class="fr d-flex align-items-center"><span class="n">от</span><input class="form-control" value="-50"><span class="spin"><i><b class="up"></b></i><i><b class="dn"></b></i></span><span class="pct">%</span></div>
                <div class="fr d-flex align-items-center"><span class="n">до</span><input class="form-control" value="50"><span class="spin"><i><b class="up"></b></i><i><b class="dn"></b></i></span><span class="pct">%</span></div>
                <div class="fr d-flex align-items-center"><span class="n">шаг</span><input class="form-control" value="10"><span class="spin"><i><b class="up"></b></i><i><b class="dn"></b></i></span><span class="pct">%</span></div>
              </div>
            </fieldset>
          </div>
          <div class="c3">
            <div class="lbl">Анализируем по:</div>
            <select class="form-select sel"><option>NPV</option></select>
            <div class="lbl">Валюта:</div>
            <select class="form-select sel"><option>Рубли</option></select>
            <div class="lbl">Единицы отображения валюты:</div>
            <select class="form-select sel"><option>руб.</option></select>
          </div>
        </div>
        <div class="gridf">
          <div class="gridc">
            <table class="table tbl">
              <colgroup><col style="width:197px"><col style="width:113px"><col style="width:109px"><col style="width:109px"><col style="width:109px"><col style="width:109px"></colgroup>
              <thead><tr><th class="h0">Выбранные параметры:</th><th>-50%</th><th>-40%</th><th>-30%</th><th>-20%</th><th>-10%</th></tr></thead>
              <tbody>
                <tr><th>Уровень инфляции</th><td>1 743 402 512,48</td><td>1 864 998 912,19</td><td>1 990 741 904,78</td><td>2 120 783 318,73</td><td>2 255 280 724,59</td></tr>
                <tr><th>Объем инвестиций</th><td>2 626 535 640,37</td><td>2 580 108 043,64</td><td>2 533 680 446,90</td><td>2 487 252 850,16</td><td>2 440 825 253,42</td></tr>
                <tr><th>Цена сбыта</th><td>-1 945 879 587,63</td><td>-819 792 046,34</td><td>99 897 501,11</td><td>887 177 309,39</td><td>1 642 571 049,15</td></tr>
                <tr><th>Прямые издержки</th><td>4 303 960 138,95</td><td>3 922 047 642,50</td><td>3 540 135 146,05</td><td>3 158 222 649,60</td><td>2 776 310 153,15</td></tr>
                <tr><th>Общие издержки</th><td>2 553 812 814,14</td><td>2 521 929 782,65</td><td>2 490 046 751,16</td><td>2 458 163 719,67</td><td>2 426 280 688,18</td></tr>
                <tr><th><span class="mark"></span>Ставки по кредитам</th><td>2 395 929 138,59</td><td>2 395 622 842,21</td><td>2 395 316 545,83</td><td>2 395 010 249,45</td><td>2 394 703 953,07</td></tr>
              </tbody>
            </table>
          </div>
          <div class="hs">
            <svg width="8" height="12"><path d="M6 1L2 6l4 5" fill="none" stroke="#555" stroke-width="1.700"/></svg>
            <div class="th"></div>
            <svg width="8" height="12"><path d="M2 1l4 5-4 5" fill="none" stroke="#555" stroke-width="1.700"/></svg>
          </div>
        </div>
      </div>
    </section>
  </main>

  <div class="status d-flex">
    <div class="cell1"></div>
    <a href="#">© Expert Systems</a>
  </div>
  <footer class="taskbar d-flex align-items-center">
    <div class="tstart"><svg width="20" height="20" viewBox="0 0 20 20"><path d="M0 2.800l8.800-1.200v8H0zM9.800 1.400L20 0v9.600H9.800zM0 10.600h8.800v8L0 17.300zM9.800 10.600H20V20L9.800 18.600z" fill="#000"/></svg></div>
    <div class="tapp"><svg width="30" height="30" viewBox="0 0 30 30"><defs><linearGradient id="eg" x1="0" y1="0" x2="1" y2="1"><stop offset="0" stop-color="#0f8fd6"/><stop offset=".6" stop-color="#35c1e1"/><stop offset="1" stop-color="#71d957"/></linearGradient></defs><circle cx="15" cy="15" r="15" fill="url(#eg)"/><path d="M30 17c-1 8-7 13-14 13C7 30 2 24 1 15c3 8 11 10 14 8 3 2 11 1 15-6z" fill="#0d5ea8"/><path d="M13 16c0-4 4-6 7-5 3 1 5 4 3 6H16c1 4 8 5 12 2-2 6-10 8-14 4-1-2-1-4-1-7z" fill="#fff" opacity=".0"/><path d="M15 10c5-1 9 2 8 6h-9c0-3 0-5 1-6z" fill="#fff"/><path d="M14 16c-2 4 1 9 8 8-5 4-13 1-13-6 0-3 2-6 5-7-1 1-1 3 0 5z" fill="#1a8fd1"/></svg></div>
    <div class="tapp"><svg width="30" height="30" viewBox="0 0 30 30"><circle cx="15" cy="15" r="14.500" fill="#f4f4f4" stroke="#d5d5d5"/><path d="M7 8l8 9 8-9M15 17v9" fill="none" stroke="#e2141d" stroke-width="3.200"/></svg></div>
    <div class="tapp"><svg width="28" height="24" viewBox="0 0 28 24"><path d="M0 2a2 2 0 0 1 2-2h8l3 3H0z" fill="#dc9e0e"/><path d="M0 4h28v20H0z" fill="#fbd866"/><path d="M9 23v-7a2 2 0 0 1 2-2h6a2 2 0 0 1 2 2v7h-3v-5h-4v5z" fill="#3a85d3"/></svg></div>
    <div class="tapp pic"><svg width="28" height="24" viewBox="0 0 28 24"><rect x="3" y="3" width="22" height="18" fill="#f4f4f4" stroke="#8f9aa5"/><path d="M4 4h20v9H4z" fill="#a9d9ec"/><path d="M4 12c5-7 9-3 12-1l8-2v11H4z" fill="#4f9a8a"/><path d="M4 16c6-3 12 0 20 0v4H4z" fill="#2e6f62"/><path d="M0 6V0h6v2H2v4zM28 6V0h-6v2h4v4zM0 18v6h6v-2H2v-4zM28 18v6h-6v-2h4v-4z" fill="#2d7fc4"/></svg></div>
    <div class="tapp act"><svg width="26" height="32" viewBox="0 0 24 24"><use href="#bulb"/></svg></div>
    <div class="flex-grow-1"></div>
    <div class="tray d-flex align-items-center">
      <svg width="16" height="10"><path d="M1 9l7-7 7 7" fill="none" stroke="#222" stroke-width="1.300"/></svg>
      <svg width="21" height="18" class="ms-2 ps-0"><path d="M2.500 1.500h18v12h-17M7 17.500h8M11 14v3" fill="none" stroke="#222" stroke-width="1.200"/><rect x=".5" y=".5" width="4.500" height="5" fill="#d3deea" stroke="#222"/><path d="M2.500 5.500V16" stroke="#222"/></svg>
      <svg width="22" height="20" class="ms-2"><path d="M1 7h3l5-5v16l-5-5H1z" fill="none" stroke="#222" stroke-width="1.200"/><path d="M12 7a4 4 0 0 1 0 6" fill="none" stroke="#222"/><path d="M15 4a9 9 0 0 1 0 12M18 2a12 12 0 0 1 0 16" fill="none" stroke="#aaa"/></svg>
      <svg width="21" height="21" viewBox="0 0 21 21" class="ms-3"><path d="M16 1L6 15l-3 5 5-3L18 3z" fill="none" stroke="#222" stroke-width="1.200"/><path d="M13 6c3 0 6 2 7 5-3 2-6 2-7-1M1 19c0-4 2-6 5-8" fill="none" stroke="#222" stroke-width="1.200"/></svg>
      <span class="lang">РУС</span>
      <div class="clock"><div>17:45</div><div>22.10.2020</div></div>
      <svg width="20" height="21" class="ntf"><path d="M.5.5h19v15h-7l-2.500 3-2.500-3h-7z" fill="none" stroke="#111"/></svg>
    </div>
  </footer>
</div>
</body>
</html>
